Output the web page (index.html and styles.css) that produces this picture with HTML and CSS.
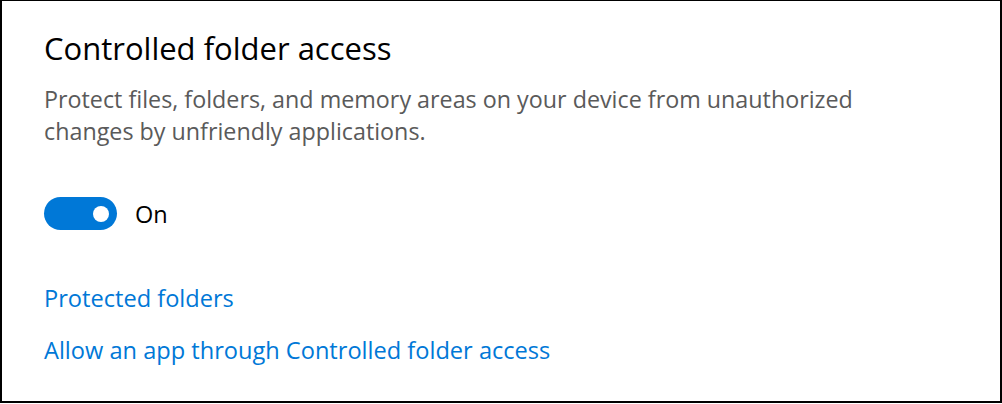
FILE: index.html
```html
<!DOCTYPE html>
<html lang="en">

<head>
    <meta charset="UTF-8">
    <meta name="viewport" content="width=device-width, initial-scale=1.0">
    <title>Controlled folder access</title>
    <link rel="stylesheet" href="styles.css">
</head>

<body>
    <div class="panel">
        <h2 class="title">Controlled folder access</h2>
        <p class="description">Protect files, folders, and memory areas on your device from unauthorized<br>changes by unfriendly applications.</p>
        <div class="toggle-row">
            <div class="toggle"><span class="knob"></span></div>
            <span class="toggle-label">On</span>
        </div>
        <div class="links">
            <a href="#" class="link">Protected folders</a>
            <a href="#" class="link">Allow an app through Controlled folder access</a>
        </div>
    </div>
</body>

</html>
```

FILE: styles.css
```css
body {
    margin: 0;
    font-family: "Open Sans", "Noto Sans", sans-serif;
    background-color: #fff;
}

.panel {
    box-sizing: border-box;
    width: 1002px;
    height: 403px;
    border-top: 1px solid #000;
    border-left: 2px solid #000;
    border-right: 2px solid #000;
    border-bottom: 2px solid #000;
    padding: 27px 0 0 42px;
}

.title {
    margin: 0;
    font-size: 31px;
    font-weight: 400;
    line-height: 40px;
    color: #000;
}

.description {
    margin: 15px 0 0;
    font-size: 23.3px;
    line-height: 32px;
    color: #5a5a5a;
}

.toggle-row {
    display: flex;
    align-items: center;
    gap: 18px;
    margin-top: 50px;
    height: 33px;
}

.toggle {
    box-sizing: border-box;
    width: 73px;
    height: 33px;
    border-radius: 17px;
    background-color: #0078d7;
    display: flex;
    align-items: center;
    justify-content: flex-end;
    padding-right: 8px;
}

.knob {
    width: 16px;
    height: 16px;
    border-radius: 50%;
    background-color: #fff;
}

.toggle-label {
    font-size: 23.5px;
    line-height: 33px;
    padding-top: 2px;
    color: #000;
}

.links {
    display: flex;
    flex-direction: column;
    align-items: flex-start;
    gap: 20px;
    margin-top: 52px;
}

.link {
    font-size: 23.6px;
    line-height: 32px;
    color: #0078d7;
    text-decoration: none;
}
```
